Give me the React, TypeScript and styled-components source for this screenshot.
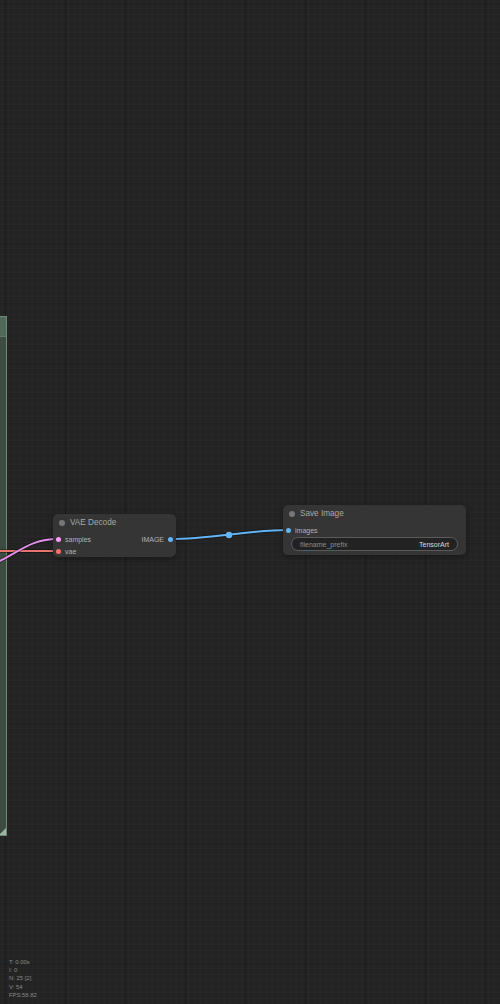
import React from "react";
import styled, { createGlobalStyle } from "styled-components";

const GlobalStyle = createGlobalStyle`
  html, body {
    margin: 0;
    padding: 0;
    background: #222222;
  }
  body {
    font-family: "Liberation Sans", Arial, sans-serif;
  }
`;

// canvas with the litegraph style grid
const Canvas = styled.div`
  position: relative;
  width: 500px;
  height: 1004px;
  overflow: hidden;
  background-color: #232323;
  background-image:
    linear-gradient(to right, rgba(0, 0, 0, 0.22) 1px, transparent 1px),
    linear-gradient(to bottom, rgba(0, 0, 0, 0.1) 1px, transparent 1px),
    linear-gradient(to right, rgba(255, 255, 255, 0.014) 1px, transparent 1px),
    linear-gradient(to bottom, rgba(255, 255, 255, 0.014) 1px, transparent 1px);
  background-size: 60px 60px, 60px 60px, 6px 6px, 6px 6px;
  background-position: 5px 0, 0 3px, 2px 0, 0 2px;
`;

const Wires = styled.svg`
  position: absolute;
  inset: 0;
  pointer-events: none;
`;

const Group = styled.div`
  position: absolute;
  left: -4px;
  top: 316px;
  width: 11px;
  height: 520px;
  display: flex;
  flex-direction: column;
  background: #3c4c41;
  border: 1px solid #6d8a76;
  box-sizing: border-box;
`;

const GroupHeader = styled.div`
  height: 19px;
  background: #52695a;
  border-bottom: 1px solid #5e7a67;
`;

const GroupHandle = styled.div`
  position: absolute;
  right: 0;
  bottom: 0;
  width: 0;
  height: 0;
  border-left: 7px solid transparent;
  border-bottom: 7px solid #9bb5a2;
`;

const Node = styled.div<{ $x: number; $y: number; $w: number; $h: number }>`
  position: absolute;
  left: ${(p) => p.$x}px;
  top: ${(p) => p.$y}px;
  width: ${(p) => p.$w}px;
  height: ${(p) => p.$h}px;
  display: flex;
  flex-direction: column;
  background: #353535;
  border-radius: 5px;
  box-shadow: 0 2px 6px rgba(0, 0, 0, 0.3);
`;

const Title = styled.div`
  height: 17px;
  flex-shrink: 0;
  display: flex;
  align-items: center;
  gap: 5px;
  padding-left: 6px;
  font-size: 8.2px;
  color: #a8a8a8;
`;

const TitleDot = styled.span`
  width: 6px;
  height: 6px;
  border-radius: 50%;
  background: #777;
`;

const Body = styled.div`
  display: flex;
  flex-direction: column;
  padding-top: 2px;
`;

const Row = styled.div`
  height: 12px;
  display: flex;
  align-items: center;
  justify-content: space-between;
  font-size: 7px;
  color: #b4b4b4;
`;

const Slot = styled.span<{ $right?: boolean }>`
  display: flex;
  align-items: center;
  gap: 4px;
  flex-direction: ${(p) => (p.$right ? "row-reverse" : "row")};
  padding: ${(p) => (p.$right ? "0 3px 0 0" : "0 0 0 3px")};
`;

const Dot = styled.span<{ $color: string }>`
  width: 5px;
  height: 5px;
  border-radius: 50%;
  background: ${(p) => p.$color};
`;

const Widget = styled.div`
  margin: 1px 8px 0 8px;
  height: 14px;
  box-sizing: border-box;
  display: flex;
  align-items: center;
  justify-content: space-between;
  padding: 0 8px;
  border: 1px solid #5a5a5a;
  border-radius: 7px;
  background: #222;
  font-size: 7px;
`;

const WidgetLabel = styled.span`
  color: #8c8c8c;
`;

const WidgetValue = styled.span`
  color: #dcdcdc;
`;

const Stats = styled.div`
  position: absolute;
  left: 9px;
  top: 958px;
  display: flex;
  flex-direction: column;
  font-size: 5.9px;
  line-height: 8.2px;
  color: #8a8a8a;
`;

export default function App() {
  return (
    <Canvas>
      <GlobalStyle />
      <Group>
        <GroupHeader />
        <GroupHandle />
      </Group>

      <Wires width={500} height={1004}>
        {/* vae link */}
        <path d="M -10 551 L 58 551" stroke="#000" strokeOpacity="0.45" strokeWidth="3.5" fill="none" />
        <path d="M -10 551 L 58 551" stroke="#e8766e" strokeWidth="2" fill="none" />
        {/* latent link */}
        <path d="M -10 566 C 20 552, 30 539, 58 539" stroke="#000" strokeOpacity="0.45" strokeWidth="3.5" fill="none" />
        <path d="M -10 566 C 20 552, 30 539, 58 539" stroke="#e090e8" strokeWidth="2" fill="none" />
        {/* image link */}
        <path d="M 170 539 C 210 539, 250 530, 288 530" stroke="#000" strokeOpacity="0.45" strokeWidth="3.5" fill="none" />
        <path d="M 170 539 C 210 539, 250 530, 288 530" stroke="#64b5f6" strokeWidth="2" fill="none" />
        <circle cx="229" cy="535" r="3.2" fill="#64b5f6" />
      </Wires>

      <Node $x={53} $y={514} $w={123} $h={43}>
        <Title>
          <TitleDot />
          VAE Decode
        </Title>
        <Body>
          <Row>
            <Slot>
              <Dot $color="#ff9cf9" />
              samples
            </Slot>
            <Slot $right>
              <Dot $color="#64b5f6" />
              IMAGE
            </Slot>
          </Row>
          <Row>
            <Slot>
              <Dot $color="#ff6e6e" />
              vae
            </Slot>
          </Row>
        </Body>
      </Node>

      <Node $x={283} $y={505} $w={183} $h={50}>
        <Title>
          <TitleDot />
          Save Image
        </Title>
        <Body>
          <Row>
            <Slot>
              <Dot $color="#64b5f6" />
              images
            </Slot>
          </Row>
          <Widget>
            <WidgetLabel>filename_prefix</WidgetLabel>
            <WidgetValue>TensorArt</WidgetValue>
          </Widget>
        </Body>
      </Node>

      <Stats>
        <span>T: 0.00s</span>
        <span>I: 0</span>
        <span>N: 25 [2]</span>
        <span>V: 54</span>
        <span>FPS:58.82</span>
      </Stats>
    </Canvas>
  );
}
